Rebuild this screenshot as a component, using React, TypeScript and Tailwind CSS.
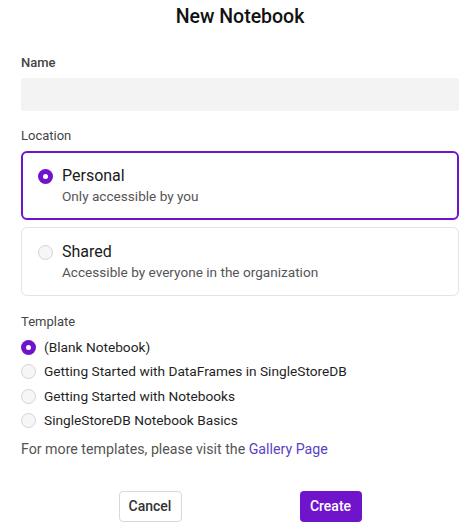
import React from 'react';

const Radio = ({ checked }: { checked: boolean }) =>
  checked ? (
    <span className="flex h-[15px] w-[15px] shrink-0 items-center justify-center rounded-full bg-[#7014cc]">
      <span className="h-[5px] w-[5px] rounded-full bg-white" />
    </span>
  ) : (
    <span className="h-[15px] w-[15px] shrink-0 rounded-full border border-[#d4d4d4] bg-[#f6f6f6]" />
  );

const LocationCard = ({
  title,
  desc,
  selected,
}: {
  title: string;
  desc: string;
  selected: boolean;
}) => (
  <div
    className={
      selected
        ? 'rounded-[6px] border-2 border-[#7014cc] pl-[15px] pt-[13px] pb-[12px]'
        : 'rounded-[6px] border border-[#e4e4e4] pl-[16px] pt-[14px] pb-[13px]'
    }
  >
    <div className="flex items-center gap-[9px]">
      <Radio checked={selected} />
      <span className="text-[16px] leading-[20px] text-[#1a1a1a]">{title}</span>
    </div>
    <div className="pl-[24px] text-[13.6px] leading-[20px] text-[#555]">{desc}</div>
  </div>
);

const templates = [
  '(Blank Notebook)',
  'Getting Started with DataFrames in SingleStoreDB',
  'Getting Started with Notebooks',
  'SingleStoreDB Notebook Basics',
];

export default function App() {
  return (
    <div
      className="h-[530px] w-[474px] bg-white pl-[21px] pr-[15px] pt-[1px] text-[#1a1a1a]"
      style={{ fontFamily: 'Roboto, "Liberation Sans", sans-serif' }}
    >
      <h1 className="text-center text-[19.5px] font-medium leading-[32px] text-[#111]">New Notebook</h1>

      <div className="mt-[22px] text-[13px] font-medium leading-[16px] text-[#444]">Name</div>
      <div className="mt-[7px] h-[33px] rounded-[3px] bg-[#f3f3f3]" />

      <div className="mt-[17px] text-[13px] leading-[16px] text-[#444]">Location</div>
      <div className="mt-[7px] flex flex-col gap-[7px]">
        <LocationCard title="Personal" desc="Only accessible by you" selected />
        <LocationCard title="Shared" desc="Accessible by everyone in the organization" selected={false} />
      </div>

      <div className="mt-[18px] text-[13px] leading-[16px] text-[#444]">Template</div>
      <div className="mt-[5px] flex flex-col">
        {templates.map((t, i) => (
          <div key={t} className="flex h-[24.5px] items-center gap-[8px]">
            <Radio checked={i === 0} />
            <span className="text-[13.7px] text-[#1f1f1f]">{t}</span>
          </div>
        ))}
      </div>

      <div className="mt-[6px] text-[14.2px] leading-[20px] text-[#555]">
        For more templates, please visit the <span className="text-[#5b3fc4]">Gallery Page</span>
      </div>

      <div className="mt-[32px] flex justify-center gap-[118px]">
        <button className="h-[31px] w-[63px] rounded-[4px] border border-[#d8d8d8] bg-white text-[14px] font-medium text-[#333]">
          Cancel
        </button>
        <button className="h-[31px] w-[62px] rounded-[4px] bg-[#7014cc] text-[14px] font-medium text-white">
          Create
        </button>
      </div>
    </div>
  );
}
